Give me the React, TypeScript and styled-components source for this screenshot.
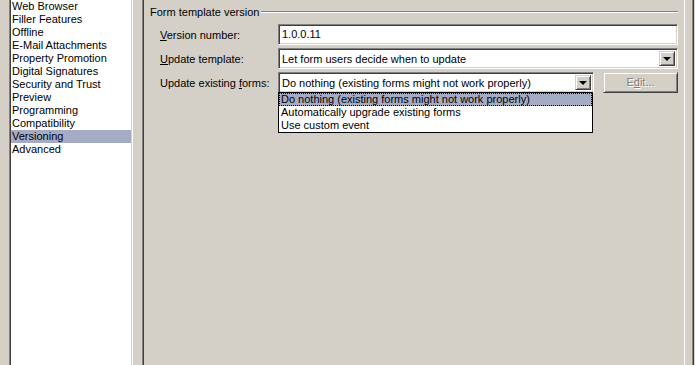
import React from "react";
import styled, { createGlobalStyle } from "styled-components";

const GlobalStyle = createGlobalStyle`
  html, body {
    margin: 0;
    padding: 0;
    background: #d4d0c8;
  }
  body {
    font-family: Tahoma, "Liberation Sans", Arial, sans-serif;
    font-size: 11px;
    color: #000;
  }
`;

const Window = styled.div`
  display: flex;
  width: 695px;
  height: 365px;
  background: #d4d0c8;
  overflow: hidden;
`;

const Gutter = styled.div<{ width: number }>`
  flex: none;
  width: ${(p) => p.width}px;
`;

const CategoryList = styled.ul`
  flex: none;
  width: 120px;
  margin: 0;
  padding: 0 1px;
  list-style: none;
  background: #fff;
  border-left: 1px solid #808080;
  border-right: 1px solid #fff;
  box-shadow: inset 1px 0 #404040, inset -1px 0 #d4d0c8;
  overflow: hidden;
`;

const CategoryItem = styled.li<{ selected?: boolean }>`
  height: 13px;
  line-height: 13px;
  padding-left: 1px;
  white-space: nowrap;
  background: ${(p) => (p.selected ? "#a6abc5" : "transparent")};
`;

const Panel = styled.div`
  flex: none;
  box-sizing: border-box;
  width: 543px;
  border-left: 1px solid #808080;
  border-right: 1px solid #fff;
  box-shadow: inset 1px 0 #404040, inset -1px 0 #d4d0c8;
  padding: 6px 6px 0 7px;
`;

const SectionHeader = styled.div`
  display: flex;
  align-items: center;
  height: 13px;
  line-height: 13px;
  gap: 2px;
  &::after {
    content: "";
    flex: 1;
    height: 0;
    border-top: 1px solid #808080;
    border-bottom: 1px solid #fff;
    margin-top: -1px;
  }
`;

const Rows = styled.div`
  display: flex;
  flex-direction: column;
  gap: 3px;
  margin-top: 5px;
  padding-left: 10px;
`;

const Row = styled.div`
  display: flex;
  align-items: center;
  height: 21px;
`;

const Label = styled.div`
  flex: none;
  width: 118px;
  white-space: nowrap;
`;

const sunken = `
  box-sizing: border-box;
  background: #fff;
  border-top: 1px solid #808080;
  border-left: 1px solid #808080;
  border-bottom: 1px solid #fff;
  border-right: 1px solid #fff;
  box-shadow: inset 1px 1px #404040, inset -1px -1px #d4d0c8;
`;

const TextBox = styled.div`
  ${sunken}
  flex: 1;
  height: 21px;
  line-height: 19px;
  padding-left: 3px;
  white-space: nowrap;
`;

const Select = styled.div<{ width?: number }>`
  ${sunken}
  position: relative;
  display: flex;
  align-items: stretch;
  height: 21px;
  padding: 2px;
  ${(p) => (p.width ? `flex: none; width: ${p.width}px;` : "flex: 1;")}
`;

const SelectValue = styled.div`
  flex: 1;
  line-height: 17px;
  padding-left: 1px;
  white-space: nowrap;
  overflow: hidden;
`;

const raised = `
  box-sizing: border-box;
  background: #d4d0c8;
  border-top: 1px solid #d4d0c8;
  border-left: 1px solid #d4d0c8;
  border-bottom: 1px solid #404040;
  border-right: 1px solid #404040;
  box-shadow: inset 1px 1px #fff, inset -1px -1px #808080;
`;

const ArrowButton = styled.div`
  ${raised}
  flex: none;
  width: 16px;
  display: flex;
  align-items: center;
  justify-content: center;
  &::before {
    content: "";
    width: 0;
    height: 0;
    border-left: 4px solid transparent;
    border-right: 4px solid transparent;
    border-top: 4px solid #000;
    margin-top: 1px;
  }
`;

const DropList = styled.ul`
  position: absolute;
  top: 100%;
  left: -1px;
  right: 0;
  margin: 0;
  padding: 0;
  list-style: none;
  background: #fff;
  border: 1px solid #000;
  z-index: 2;
`;

const DropItem = styled.li<{ active?: boolean }>`
  box-sizing: border-box;
  height: 13px;
  line-height: 12px;
  padding-left: 2px;
  white-space: nowrap;
  background: ${(p) => (p.active ? "#a6abc5" : "transparent")};
  outline: ${(p) => (p.active ? "1px dotted #000" : "none")};
  outline-offset: -1px;
`;

const Button = styled.div`
  ${raised}
  flex: none;
  width: 75px;
  height: 21px;
  margin-left: 9px;
  text-align: center;
  line-height: 19px;
  color: #808080;
  text-shadow: 1px 1px 0 #fff;
`;

const categories = [
  "Web Browser",
  "Filler Features",
  "Offline",
  "E-Mail Attachments",
  "Property Promotion",
  "Digital Signatures",
  "Security and Trust",
  "Preview",
  "Programming",
  "Compatibility",
  "Versioning",
  "Advanced",
];

const upgradeOptions = [
  "Do nothing (existing forms might not work properly)",
  "Automatically upgrade existing forms",
  "Use custom event",
];

export default function App() {
  return (
    <>
      <GlobalStyle />
      <Window>
        <Gutter width={9} />
        <CategoryList>
          {categories.map((c) => (
            <CategoryItem key={c} selected={c === "Versioning"}>
              {c}
            </CategoryItem>
          ))}
        </CategoryList>
        <Gutter width={9} />
        <Panel>
          <SectionHeader>Form template version</SectionHeader>
          <Rows>
            <Row>
              <Label>
                <u>V</u>ersion number:
              </Label>
              <TextBox>1.0.0.11</TextBox>
            </Row>
            <Row>
              <Label>
                <u>U</u>pdate template:
              </Label>
              <Select>
                <SelectValue>Let form users decide when to update</SelectValue>
                <ArrowButton />
              </Select>
            </Row>
            <Row>
              <Label>
                Update existing <u>f</u>orms:
              </Label>
              <Select width={316}>
                <SelectValue>{upgradeOptions[0]}</SelectValue>
                <ArrowButton />
                <DropList>
                  {upgradeOptions.map((o, i) => (
                    <DropItem key={o} active={i === 0}>
                      {o}
                    </DropItem>
                  ))}
                </DropList>
              </Select>
              <Button>
                E<u>d</u>it...
              </Button>
            </Row>
          </Rows>
        </Panel>
        <Gutter width={7} />
        <Panel />
      </Window>
    </>
  );
}
